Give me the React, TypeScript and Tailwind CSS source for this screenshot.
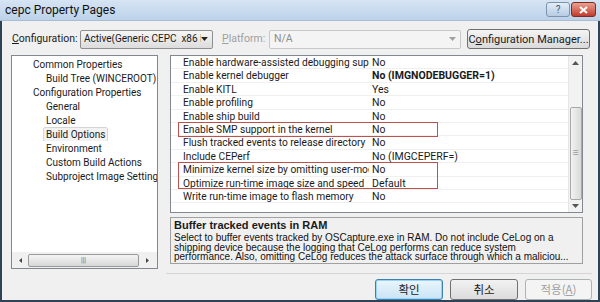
import React from 'react';

const treeItems: { label: string; indent: boolean; selected?: boolean }[] = [
  { label: 'Common Properties', indent: false },
  { label: 'Build Tree (WINCEROOT)', indent: true },
  { label: 'Configuration Properties', indent: false },
  { label: 'General', indent: true },
  { label: 'Locale', indent: true },
  { label: 'Build Options', indent: true, selected: true },
  { label: 'Environment', indent: true },
  { label: 'Custom Build Actions', indent: true },
  { label: 'Subproject Image Settings', indent: true },
];

const props: { name: string; value: string; bold?: boolean }[] = [
  { name: 'Enable hardware-assisted debugging support', value: 'No' },
  { name: 'Enable kernel debugger', value: 'No (IMGNODEBUGGER=1)', bold: true },
  { name: 'Enable KITL', value: 'Yes' },
  { name: 'Enable profiling', value: 'No' },
  { name: 'Enable ship build', value: 'No' },
  { name: 'Enable SMP support in the kernel', value: 'No' },
  { name: 'Flush tracked events to release directory', value: 'No' },
  { name: 'Include CEPerf', value: 'No (IMGCEPERF=)' },
  { name: 'Minimize kernel size by omitting user-mode', value: 'No' },
  { name: 'Optimize run-time image size and speed', value: 'Default' },
  { name: 'Write run-time image to flash memory', value: 'No' },
];

const ui = { fontFamily: 'Roboto, "Noto Sans CJK KR", sans-serif' };
const desc = { fontFamily: '"Liberation Sans", "Noto Sans CJK KR", sans-serif' };

function Arrow({ dim }: { dim?: boolean }) {
  return (
    <svg width="7" height="4" viewBox="0 0 7 4">
      <path d="M0 0h7L3.5 4z" fill={dim ? '#a0a0a0' : '#222'} />
    </svg>
  );
}

export default function App() {
  return (
    <div
      className="w-[600px] h-[302px] flex flex-col bg-[#2f4256] overflow-hidden text-[#1a1a1a]"
      style={ui}
    >
      {/* title bar */}
      <div className="h-[21px] shrink-0 flex items-center justify-between pl-[5px] pr-[4px] bg-gradient-to-b from-[#d6e4f3] to-[#bcd2ea] border-b border-[#a8bcd3]">
        <span className="text-[12px] leading-none text-[#111]">cepc Property Pages</span>
        <div className="flex items-start self-start mt-[2px] gap-[1px]">
          <div className="w-[24px] h-[15px] rounded-[3px] border border-[#7c93ad] bg-gradient-to-b from-[#e3edf7] to-[#b7cbe2] flex items-center justify-center text-[10px] leading-none text-[#3e5670]">
            ?
          </div>
          <div className="w-[25px] h-[15px] rounded-[3px] border border-[#7d2c22] bg-gradient-to-b from-[#e8a08f] to-[#c0392b] flex items-center justify-center">
            <svg width="9" height="8" viewBox="0 0 9 8">
              <path d="M1 1l7 6M8 1L1 7" stroke="#fff" strokeWidth="2" />
            </svg>
          </div>
        </div>
      </div>

      {/* body */}
      <div className="flex-1 flex flex-col bg-[#f0f0f0] mx-[2px] mb-[3px] pt-[8px] pl-[9px] pr-[6px]">
        {/* configuration row */}
        <div className="flex items-center h-[20px] text-[10.5px] whitespace-nowrap">
          <span className="w-[69px] pl-[1px]">
            <u>C</u>onfiguration:
          </span>
          <div className="w-[133px] h-[19px] border border-[#8e8f8f] rounded-[2px] bg-gradient-to-b from-[#f6f6f6] to-[#dcdcdc] flex items-center justify-between pl-[3px] pr-[4px]">
            <span className="leading-none text-[10px] whitespace-nowrap overflow-hidden">Active(Generic CEPC&nbsp; x86 I</span>
            <Arrow />
          </div>
          <span className="ml-[9px] w-[47px] text-[#a0a0a0]">
            <u>P</u>latform:
          </span>
          <div className="w-[192px] h-[19px] border border-[#c8c8c8] rounded-[2px] bg-[#f4f4f4] flex items-center justify-between pl-[4px] pr-[4px] text-[#8d8d8d]">
            <span className="leading-none">N/A</span>
            <Arrow dim />
          </div>
          <div className="ml-[6px] w-[123px] h-[20px] border border-[#707070] rounded-[3px] bg-gradient-to-b from-[#f4f4f4] to-[#dadada] flex items-center justify-center">
            <span className="leading-none text-[11px]">
              C<u>o</u>nfiguration Manager...
            </span>
          </div>
        </div>

        {/* main */}
        <div className="flex mt-[6px] h-[214px]">
          {/* tree */}
          <div className="w-[147px] h-[214px] border border-[#828790] bg-white flex flex-col">
            <div className="flex-1 pt-[1px] text-[10px]">
              {treeItems.map((t) => (
                <div
                  key={t.label}
                  className={`h-[14px] flex items-center whitespace-nowrap overflow-hidden ${t.indent ? 'pl-[31px]' : 'pl-[18px]'}`}
                >
                  <span
                    className={`leading-[13px] px-[2px] ${t.selected ? 'bg-[#f2f2f2] border border-[#d5d5d5] rounded-[2px]' : 'border border-transparent'}`}
                  >
                    {t.label}
                  </span>
                </div>
              ))}
            </div>
            <div className="h-[16px] flex items-center bg-[#f0f0f0] px-[3px] gap-[3px]">
              <span className="w-[10px] flex justify-center">
                <svg width="3" height="5" viewBox="0 0 3 5">
                  <path d="M3 0v5L0 2.5z" fill="#444" />
                </svg>
              </span>
              <div className="w-[111px] h-[13px] rounded-[2px] border border-[#9a9a9a] bg-gradient-to-b from-[#f4f4f4] to-[#d8d8d8] flex items-center justify-center">
                <span className="text-[7px] leading-none text-[#666]">|||</span>
              </div>
              <span className="w-[10px] flex justify-center">
                <svg width="3" height="5" viewBox="0 0 3 5">
                  <path d="M0 0v5L3 2.5z" fill="#444" />
                </svg>
              </span>
            </div>
          </div>

          {/* right column */}
          <div className="ml-[12px] w-[413px] flex flex-col">
            <div className="h-[158px] border border-[#828790] bg-white flex">
              <div className="flex-1 relative">
                {props.map((p) => (
                  <div
                    key={p.name}
                    className="h-[13.4px] flex text-[10.2px] leading-[13px] border-b border-[#f0f0f0]"
                  >
                    <div className="w-[12px] shrink-0" />
                    <div className="w-[186px] mr-[3px] shrink-0 whitespace-nowrap overflow-hidden">{p.name}</div>
                    <div className={`flex-1 whitespace-nowrap text-[10.5px] ${p.bold ? 'font-bold' : ''}`}>{p.value}</div>
                  </div>
                ))}
                {/* red annotation boxes */}
                <div className="absolute left-[7px] top-[66px] w-[260px] h-[15px] border border-[#c0504d]" />
                <div className="absolute left-[7px] top-[106px] w-[260px] h-[27px] border border-[#c0504d]" />
              </div>
              <div className="w-[14px] shrink-0 bg-[#f2f2f2] border-l border-[#e6e6e6] flex flex-col items-center py-[3px]">
                <svg width="7" height="4" viewBox="0 0 7 4" className="mt-[2px]">
                  <path d="M0 4h7L3.5 0z" fill="#555" />
                </svg>
                <div className="mt-[42px] w-[12px] h-[93px] rounded-[2px] border border-[#a9a9a9] bg-gradient-to-r from-[#f2f2f2] to-[#d9d9d9] flex items-center justify-center">
                  <span className="text-[7px] leading-none text-[#777]">≡</span>
                </div>
                <svg width="7" height="4" viewBox="0 0 7 4" className="mt-auto mb-[1px]">
                  <path d="M0 0h7L3.5 4z" fill="#555" />
                </svg>
              </div>
            </div>
            <div className="mt-[4px] h-[47px] border border-[#a0a0a0] bg-[#f0f0f0] px-[3px] pt-[1px]" style={desc}>
              <div className="text-[11px] font-bold leading-[13px]">Buffer tracked events in RAM</div>
              <div className="text-[10px] leading-[9.5px] mt-[1px] text-[#111]">
                Select to buffer events tracked by OSCapture.exe in RAM. Do not include CeLog on a
                <br />
                shipping device because the logging that CeLog performs can reduce system
                <br />
                performance. Also, omitting CeLog reduces the attack surface through which a maliciou...
              </div>
            </div>
          </div>
        </div>

        {/* separator + buttons */}
        <div className="ml-[155px] mt-[4px] border-t border-[#d5d5d5]" />
        <div className="flex justify-end gap-[7px] mt-[5px] text-[11.5px]" style={{ fontFamily: '"Noto Sans CJK KR", sans-serif' }}>
          <div className="w-[68px] h-[21px] rounded-[3px] border border-[#3c7fb1] bg-gradient-to-b from-[#eaf6fd] to-[#c9e4f5] flex items-center justify-center shadow-[inset_0_0_0_1px_#9ad3f5]">
            확인
          </div>
          <div className="w-[68px] h-[21px] rounded-[3px] border border-[#707070] bg-gradient-to-b from-[#f2f2f2] to-[#dcdcdc] flex items-center justify-center">
            취소
          </div>
          <div className="w-[67px] h-[21px] rounded-[3px] border border-[#adb2b5] bg-[#f4f4f4] flex items-center justify-center text-[#a0a0a0]">
            적용(<u>A</u>)
          </div>
        </div>
      </div>
    </div>
  );
}
